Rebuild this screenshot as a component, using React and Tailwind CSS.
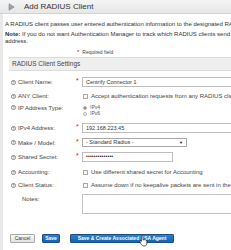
import clsx from 'clsx'

const FONT = "font-['Liberation_Sans',Arial,sans-serif]"

function PlayIcon() {
  return (
    <svg width="7" height="8" viewBox="0 0 14 16" className="shrink-0">
      <path d="M2 1.5 L12.5 8 L2 14.5 Z" fill="#9aa4ad" stroke="#7f8a94" strokeWidth="1.2" strokeLinejoin="round" />
    </svg>
  )
}

function HelpIcon() {
  return (
    <svg width="5" height="5" viewBox="0 0 10 10" className="shrink-0">
      <circle cx="5" cy="5" r="4.2" fill="#fff" stroke="#6b6b6b" strokeWidth="1.5" />
      <path d="M3.5 4 C3.5 2.4 6.5 2.4 6.5 4 C6.5 5 5 5 5 6.3" fill="none" stroke="#6b6b6b" strokeWidth="1.3" />
      <circle cx="5" cy="7.7" r="0.8" fill="#6b6b6b" />
    </svg>
  )
}

function HandCursor() {
  return (
    <svg width="9" height="12" viewBox="0 0 14 18" className="absolute left-[139px] top-[235px]">
      <path
        d="M5 1 C5.8 1 6.3 1.6 6.3 2.3 V7.6 C6.6 7.2 7.2 7.1 7.7 7.3 C8.1 6.9 8.9 6.9 9.3 7.4 C9.8 7.1 10.6 7.2 10.9 7.8 C11.5 7.6 12.3 8 12.3 8.9 V12.4 C12.3 14.6 11 16.6 9 16.6 H7 C5.6 16.6 4.6 15.8 3.9 14.6 L1.4 10.4 C1 9.7 1.3 8.9 2 8.7 C2.6 8.5 3.2 8.8 3.6 9.4 L3.7 9.6 V2.3 C3.7 1.6 4.2 1 5 1 Z"
        fill="#fff"
        stroke="#111"
        strokeWidth="1.1"
      />
    </svg>
  )
}

function Row({ label, required, icon = true, className, labelClass, children }) {
  return (
    <div className={clsx('flex', className)}>
      <div className={clsx('flex w-[66px] pl-[2px] gap-[2px] text-[6px] text-[#444]', labelClass || 'items-center')}>
        {icon ? <HelpIcon /> : <span className="w-[9px] shrink-0" />}
        <span className="whitespace-nowrap leading-[6px]">{label}</span>
      </div>
      <div className="w-[7px] pl-[1px] text-[7px] leading-[7px] text-[#d4141a]">{required && '*'}</div>
      <div className="flex-1 flex items-center">{children}</div>
    </div>
  )
}

function Checkbox({ text }) {
  return (
    <div className="flex items-center gap-[3px] ml-[1px]">
      <span className="w-[5px] h-[5px] border border-[#a9a9a9] bg-[#f7f7f7]" />
      <span className="text-[6px] text-[#444] whitespace-nowrap">{text}</span>
    </div>
  )
}

function Radio({ text, checked }) {
  return (
    <div className="flex items-center gap-[3px] h-[6px] ml-[1px]">
      <span className="w-[4px] h-[4px] rounded-full border border-[#b0b0b0] bg-white flex items-center justify-center">
        {checked && <span className="w-[2px] h-[2px] rounded-full bg-[#777]" />}
      </span>
      <span className="text-[5px] text-[#555]">{text}</span>
    </div>
  )
}

export default function App() {
  return (
    <div className={clsx('w-[231px] h-[250px] overflow-hidden bg-white relative text-[#333]', FONT)}>
      <div className="w-[320px]">
        <div className="h-[14px] flex items-center gap-[9px] pl-[8px] bg-gradient-to-b from-[#f5f5f5] to-[#e6e6e6] border-b border-[#d2d2d2]">
          <PlayIcon />
          <span className="text-[8px] text-[#333] leading-[8px]">Add RADIUS Client</span>
        </div>

        <div className="border-l-[3px] border-[#e9e9e9] pl-[2px] h-[236px]">
          <p className="pt-[7px] text-[6px] leading-[7px] whitespace-nowrap">
            A RADIUS client passes user entered authentication information to the designated RADIUS server.
          </p>
          <p className="mt-[3px] text-[6px] leading-[7px]">
            <span className="block whitespace-nowrap">
              <b>Note:</b> If you do not want Authentication Manager to track which RADIUS clients send requests, specify the IP
            </span>
            <span className="block">address.</span>
          </p>
          <p className="mt-[4px] pl-[72px] text-[5px] leading-[7px] text-[#444]">
            <span className="text-[#d4141a] text-[6px] mr-[3px]">*</span>Required field
          </p>

          <div className="ml-[4px] mt-[1px]">
            <div className="h-[14px] flex items-center pl-[3px] bg-[#efefef] border-y border-[#dcdcdc] text-[6.5px] text-[#444]">
              RADIUS Client Settings
            </div>

            <Row label="Client Name:" required className="mt-[6px] h-[10px]">
              <div className="w-full h-[10px] border border-[#bdbdbd] flex items-center pl-[3px] text-[5.5px] text-[#333]">
                Centrify Connector 1
              </div>
            </Row>

            <Row label="ANY Client:" className="mt-[5px] h-[8px]">
              <Checkbox text="Accept authentication requests from any RADIUS client" />
            </Row>

            <Row label="IP Address Type:" className="mt-[5px] h-[12px]" labelClass="items-start">
              <div className="flex flex-col self-start">
                <Radio text="IPv4" checked />
                <Radio text="IPv6" />
              </div>
            </Row>

            <Row label="IPv4 Address:" required className="mt-[6px] h-[10px]">
              <div className="w-full h-[10px] border border-[#bdbdbd] flex items-center pl-[3px] text-[5.5px] text-[#333]">
                192.168.223.45
              </div>
            </Row>

            <Row label="Make / Model:" required className="mt-[5px] h-[9px]">
              <div className="w-[105px] h-[9px] border border-[#a9a9a9] flex items-center justify-between pl-[3px] pr-[3px] text-[5.5px] text-[#333]">
                <span>- Standard Radius -</span>
                <span className="text-[4px] text-[#111]">▼</span>
              </div>
            </Row>

            <Row label="Shared Secret:" required className="mt-[5px] h-[10px]">
              <div className="w-[91px] h-[10px] border border-[#bdbdbd] flex items-center pl-[3px] text-[5px] tracking-[0.2px] text-[#222]">
                ••••••••••••••
              </div>
            </Row>

            <Row label="Accounting:" className="mt-[6px] h-[8px]">
              <Checkbox text="Use different shared secret for Accounting" />
            </Row>

            <Row label="Client Status:" className="mt-[5px] h-[8px]">
              <Checkbox text="Assume down if no keepalive packets are sent in the allotted time" />
            </Row>

            <Row label="Notes:" icon={false} className="mt-[5px] h-[20px]" labelClass="items-start pt-[2px]">
              <div className="w-full h-[20px] border border-[#c4c4c4] bg-white self-start" />
            </Row>
          </div>

          <div className="flex items-center gap-[7px] pl-[5px] mt-[20px]">
            <button className="h-[9px] w-[25px] rounded-[1px] border border-[#a8a8a8] bg-gradient-to-b from-[#f8f8f8] to-[#e2e2e2] text-[5px] text-[#333] leading-none">
              Cancel
            </button>
            <button className="h-[9px] w-[18px] rounded-[1px] border border-[#15528f] bg-gradient-to-b from-[#2b7fca] to-[#1a62aa] text-[5px] font-bold text-white leading-none">
              Save
            </button>
            <button className="h-[9px] w-[104px] ml-[3px] rounded-[1px] border border-[#15528f] bg-gradient-to-b from-[#2b7fca] to-[#1a62aa] text-[5px] font-bold text-white leading-none whitespace-nowrap">
              Save &amp; Create Associated RSA Agent
            </button>
          </div>
        </div>
      </div>
      <HandCursor />
    </div>
  )
}
